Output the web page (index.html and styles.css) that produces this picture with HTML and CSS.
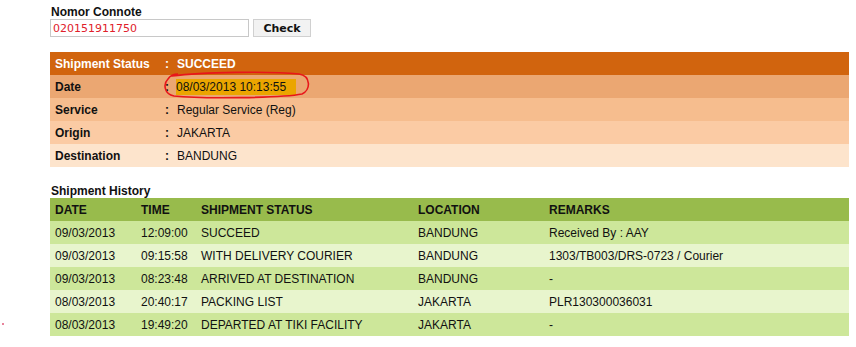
FILE: index.html
```html
<!DOCTYPE html>
<html>
<head>
<meta charset="utf-8">
<link rel="stylesheet" href="styles.css">
</head>
<body>
<div class="page">
  <div class="form">
    <div class="form-label">Nomor Connote</div>
    <div class="form-row">
      <input class="connote" type="text" value="020151911750">
      <button class="check">Check</button>
    </div>
  </div>

  <table class="status">
    <tr class="s0"><td class="lbl">Shipment Status</td><td class="col">:</td><td>SUCCEED</td></tr>
    <tr class="s1"><td class="lbl">Date</td><td class="col">:</td><td class="date-cell"><span class="hl">08/03/2013 10:13:55</span>
      <svg class="circle" width="150" height="28" viewBox="0 0 150 28"><path d="M10 5 C 40 1, 108 0, 137 3 C 149 5, 149 19, 140 23 C 120 27, 40 28, 12 25 C 2 23, 1 13, 6 8 C 8 5, 12 3, 16 3" fill="none" stroke="#e8161a" stroke-width="1.6"/></svg>
    </td></tr>
    <tr class="s2"><td class="lbl">Service</td><td class="col">:</td><td>Regular Service (Reg)</td></tr>
    <tr class="s3"><td class="lbl">Origin</td><td class="col">:</td><td>JAKARTA</td></tr>
    <tr class="s4"><td class="lbl">Destination</td><td class="col">:</td><td>BANDUNG</td></tr>
  </table>

  <div class="hist-title">Shipment History</div>
  <table class="history">
    <tr class="hh"><td class="c1">DATE</td><td class="c2">TIME</td><td class="c3">SHIPMENT STATUS</td><td class="c4">LOCATION</td><td>REMARKS</td></tr>
    <tr class="ha"><td>09/03/2013</td><td>12:09:00</td><td>SUCCEED</td><td>BANDUNG</td><td>Received By : AAY</td></tr>
    <tr class="hb"><td>09/03/2013</td><td>09:15:58</td><td>WITH DELIVERY COURIER</td><td>BANDUNG</td><td>1303/TB003/DRS-0723 / Courier</td></tr>
    <tr class="ha"><td>09/03/2013</td><td>08:23:48</td><td>ARRIVED AT DESTINATION</td><td>BANDUNG</td><td>-</td></tr>
    <tr class="hb"><td>08/03/2013</td><td>20:40:17</td><td>PACKING LIST</td><td>JAKARTA</td><td>PLR130300036031</td></tr>
    <tr class="ha"><td>08/03/2013</td><td>19:49:20</td><td>DEPARTED AT TIKI FACILITY</td><td>JAKARTA</td><td>-</td></tr>
  </table>
</div>
<span class="dot"></span>
</body>
</html>
```
FILE: styles.css
```css
html, body { margin: 0; padding: 0; background: #fff; }
body { font-family: "Liberation Sans", Arial, sans-serif; font-size: 12px; color: #111; position: relative; width: 856px; height: 347px; overflow: hidden; }
.page { padding: 5px 7px 0 50px; }
.form-label { font-weight: bold; font-size: 12px; line-height: 14px; padding-left: 1px; }
.form-row { display: flex; gap: 4px; margin-top: 0; height: 18px; }
.connote { box-sizing: border-box; width: 199px; height: 18px; border: 1px solid #c8c8c8; padding: 0 2px; font-family: "DejaVu Sans", Verdana, sans-serif; font-size: 11px; color: #e0202a; outline: none; margin: 0; }
.check { box-sizing: border-box; width: 58px; height: 18px; border: 1px solid #d0d0d0; background: #f2f2f2; font-family: "DejaVu Sans", Verdana, sans-serif; font-weight: bold; font-size: 11px; color: #111; padding: 0; margin: 0; }
table { border-collapse: collapse; width: 799px; }
td { padding: 0 0 0 5px; height: 23px; white-space: nowrap; }
.status { margin-top: 15px; }
.status td { height: 23px; }
.lbl { width: 110px; font-weight: bold; }
.col { width: 7px; font-weight: bold; padding-left: 0; }
.s0 { background: #d1640e; color: #fff; font-weight: bold; }
.s0 td { color: #fff; }
.s1 { background: #eba772; }
.s2 { background: #f6bd8e; }
.s3 { background: #fbcba4; }
.s4 { background: #fde4cc; }
.date-cell { position: relative; }
.hl { background: #eba500; padding: 1px 10px 1px 0; margin-left: -1px; }
.circle { position: absolute; left: -10px; top: -4px; }
.hist-title { font-weight: bold; font-size: 12px; line-height: 14px; margin-top: 17px; padding-left: 1px; }
.history td { height: 23px; }
.c1 { width: 81px; }
.c2 { width: 55px; }
.c3 { width: 212px; }
.c4 { width: 126px; }
.hh { background: #98bb4c; font-weight: bold; }
.ha { background: #cde79a; }
.hb { background: #e8f5cd; }
.dot { position: absolute; left: 2px; top: 323px; width: 2px; height: 2px; background: #e05a7a; border-radius: 1px; }
```
